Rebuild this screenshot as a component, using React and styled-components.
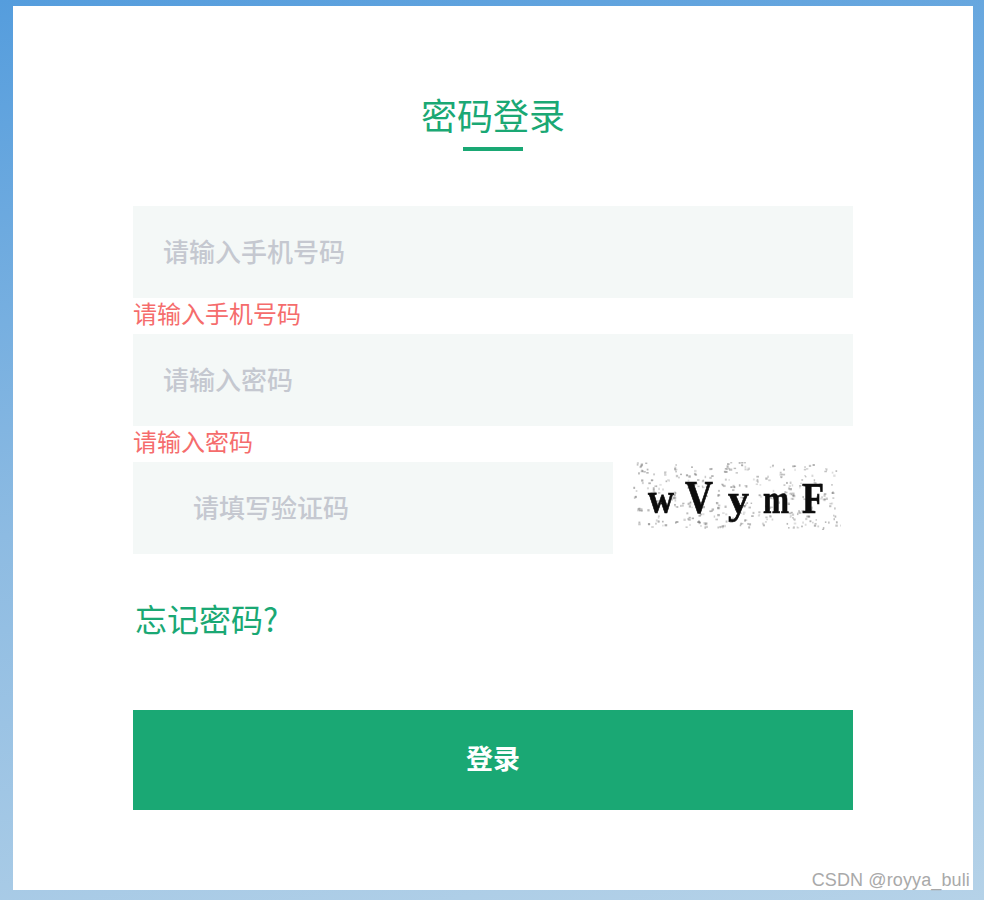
import React from 'react';
import styled, {createGlobalStyle} from 'styled-components';

const GlobalStyle = createGlobalStyle`
  html, body {
    margin: 0;
    padding: 0;
  }
  body {
    font-family: "Liberation Sans", "Noto Sans CJK SC", sans-serif;
  }
`;

// captcha speckle, seeded so it stays the same on every load
const makeNoise = () => {
  let seed = 42;
  const next = () => {
    seed = (seed * 16807) % 2147483647;
    return seed / 2147483647;
  };
  const dots = [];
  for (let i = 0; i < 210; i++) {
    const x = 2 + next() * 204;
    const y = 1 + next() * 65;
    const len = 1 + Math.floor(next() * 3);
    for (let j = 0; j < len; j++) {
      dots.push({
        x: x + (next() - 0.5) * 5,
        y: y + (next() - 0.5) * 5,
        w: 1.4 + next() * 1.2,
        h: 1.4 + next(),
        o: 0.18 + next() * 0.35,
      });
    }
  }
  return dots;
};

const noise = makeNoise();

const letters = [
  {ch: 'w', x: 15, w: 26, size: 44},
  {ch: 'V', x: 52, w: 28, size: 46},
  {ch: 'y', x: 95, w: 21, size: 42},
  {ch: 'm', x: 130, w: 26, size: 42},
  {ch: 'F', x: 169, w: 22, size: 44},
];

const Field = ({placeholder, error}) => (
  <div>
    <TextInput placeholder={placeholder} />
    {error && <ErrorText>{error}</ErrorText>}
  </div>
);

const App = () => (
  <Page>
    <GlobalStyle />
    <Panel>
      <Title>密码登录</Title>
      <TitleLine />
      <Form>
        <Field placeholder="请输入手机号码" error="请输入手机号码" />
        <Field placeholder="请输入密码" error="请输入密码" />
        <CaptchaRow>
          <CaptchaInput placeholder="请填写验证码" />
          <CaptchaSvg viewBox="0 0 208 68">
            {noise.map((d, i) => (
              <rect key={i} x={d.x} y={d.y} width={d.w} height={d.h} fill="#666" opacity={d.o} />
            ))}
            {letters.map(l => (
              <CaptchaLetter
                key={l.ch}
                x={l.x}
                y={51}
                fontSize={l.size}
                textLength={l.w}
                lengthAdjust="spacingAndGlyphs"
              >
                {l.ch}
              </CaptchaLetter>
            ))}
          </CaptchaSvg>
        </CaptchaRow>
        <ForgotLink>忘记密码?</ForgotLink>
        <LoginButton>登录</LoginButton>
      </Form>
      <Watermark>CSDN @royya_buli</Watermark>
    </Panel>
  </Page>
);

const Page = styled.div`
  box-sizing: border-box;
  width: 984px;
  height: 900px;
  padding: 6px 11px 10px 13px;
  background: linear-gradient(170deg, #559ddd 0%, #8dbbe2 50%, #b5d2e8 100%);
  overflow: hidden;
`;

const Panel = styled.div`
  position: relative;
  height: 884px;
  padding-top: 86px;
  box-sizing: border-box;
  background: #fff;
  display: flex;
  flex-direction: column;
  align-items: center;
`;

const Title = styled.div`
  font-size: 36px;
  font-weight: 400;
  line-height: 44px;
  color: #1aa874;
  font-family: "Noto Sans CJK SC", sans-serif;
`;

const TitleLine = styled.div`
  width: 60px;
  height: 4px;
  margin-top: 11px;
  background: #1aa874;
`;

const Form = styled.div`
  width: 720px;
  margin-top: 55px;
  display: flex;
  flex-direction: column;
`;

const TextInput = styled.input`
  display: block;
  box-sizing: border-box;
  width: 100%;
  height: 92px;
  padding: 0 0 4px 30px;
  border: 0;
  outline: 0;
  background: #f4f8f7;
  font-family: "Noto Sans CJK SC", sans-serif;
  font-size: 26px;
  font-weight: 500;
  &::placeholder {
    color: #c5c8d0;
    opacity: 1;
  }
`;

const ErrorText = styled.div`
  height: 36px;
  font-family: "Noto Sans CJK SC", sans-serif;
  font-size: 24px;
  font-weight: 400;
  line-height: 28px;
  padding-top: 1px;
  box-sizing: border-box;
  color: #f56c6c;
`;

const CaptchaRow = styled.div`
  display: flex;
  align-items: flex-start;
  gap: 20px;
`;

const CaptchaInput = styled(TextInput)`
  width: 480px;
  padding-left: 60px;
`;

const CaptchaSvg = styled.svg`
  display: block;
  width: 208px;
  height: 68px;
  filter: blur(0.6px);
`;

const CaptchaLetter = styled.text`
  font-family: "Liberation Serif", serif;
  font-weight: 700;
  fill: #0c0c0c;
  stroke: #0c0c0c;
  stroke-width: 0.7px;
`;

const ForgotLink = styled.div`
  height: 44px;
  margin-top: 44px;
  padding-left: 2px;
  font-family: "Noto Sans CJK SC", sans-serif;
  font-size: 32px;
  font-weight: 400;
  line-height: 40px;
  color: #1aa874;
`;

const LoginButton = styled.button`
  display: block;
  width: 100%;
  height: 100px;
  margin-top: 68px;
  border: 0;
  padding: 0 0 5px;
  background: #1aa874;
  color: #fff;
  font-family: "Noto Sans CJK SC", sans-serif;
  font-size: 27px;
  font-weight: 700;
`;

const Watermark = styled.div`
  position: absolute;
  right: 3px;
  bottom: 0;
  font-family: "Liberation Sans", sans-serif;
  font-size: 18px;
  letter-spacing: 0.12px;
  line-height: 20px;
  color: #a9a9a9;
`;

export default App;
